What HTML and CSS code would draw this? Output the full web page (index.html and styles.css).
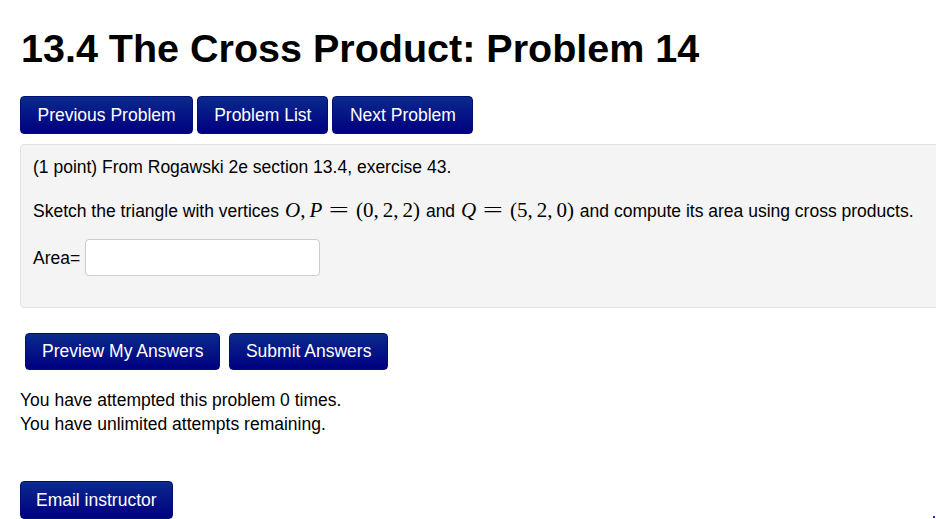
FILE: index.html
```html
<!DOCTYPE html>
<html>
<head>
<meta charset="utf-8">
<title>13.4 The Cross Product: Problem 14</title>
<link rel="stylesheet" href="styles.css">
</head>
<body>
<h1 class="title">13.4 The Cross Product: Problem 14</h1>
<div class="nav">
	<a href="javascript:;" class="btn">Previous Problem</a>
	<a href="javascript:;" class="btn">Problem List</a>
	<a href="javascript:;" class="btn">Next Problem</a>
</div>
<div class="problem">
	<p>(1 point) From Rogawski 2e section 13.4, exercise 43.</p>
	<p>Sketch the triangle with vertices <span class="m"><i>O</i>,<i class="sp">P</i><span class="eq">=</span>(0,<span class="c">2</span>,<span class="c">2</span>)</span> and <span class="m"><i>Q</i><span class="eq">=</span>(5,<span class="c">2</span>,<span class="c">0</span>)</span> and compute its area using cross products.</p>
	<p class="answer">Area= <input type="text" class="ans"></p>
</div>
<div class="submit">
	<a href="javascript:;" class="btn">Preview My Answers</a>
	<a href="javascript:;" class="btn">Submit Answers</a>
</div>
<div class="attempts">
	You have attempted this problem 0 times.<br>
	You have unlimited attempts remaining.
</div>
<div class="email">
	<a href="javascript:;" class="btn">Email instructor</a>
</div>
<span class="dot"></span>
</body>
</html>
```

FILE: styles.css
```css
* {padding:0; margin:0; box-sizing:border-box;}
html {overflow:hidden;}
body {font-family:"Liberation Sans", Arial, sans-serif; font-size:17.5px; color:#000; background:#fff; padding:0 0 0 20px; height:519px; position:relative;}

.title {font-size:39.5px; font-weight:bold; line-height:46px; padding:25px 0 0 1px; height:96px;}

.btn {display:inline-block; height:38px; line-height:36px; padding:0 16px; font-size:17.5px; color:#fff; text-decoration:none; border-radius:4px; background:linear-gradient(#0a2a8c, #000080); border:1px solid #001070; vertical-align:top;}
.nav {display:flex; gap:4px; height:48px;}
.nav .btn {padding:0 16px 0 16.5px;}

.problem {background:#f4f4f4; border:1px solid #e2e2e2; border-radius:4px 0 0 4px; margin-right:-20px; height:164px; padding:12px 12px 0;}
.problem p {line-height:20px; margin-bottom:23px;}
.m {font-family:"Liberation Serif", "Times New Roman", serif; font-size:21px; margin:0 1px;}
.m i {font-style:italic;}
.m .sp {margin-left:4px;}
.m .c {margin-left:4px;}
.eq {display:inline-block; transform:scaleX(1.7); margin:0 11px;}
.answer {display:flex; align-items:center; gap:5px; margin-top:-5px;}
.ans {width:235px; height:37px; border:1px solid #ccc; border-radius:4px; background:#fff;}

.submit {display:flex; gap:9px; padding:25px 0 0 5px; height:80px;}
.submit .btn {padding:0 15.5px 0 16px; height:37px; line-height:35px;}

.attempts {line-height:24px; height:93px;}
.email .btn {padding:0 15px;}

.dot {position:absolute; left:933px; top:516px; width:2px; height:2px; background:#2020ff;}
```
